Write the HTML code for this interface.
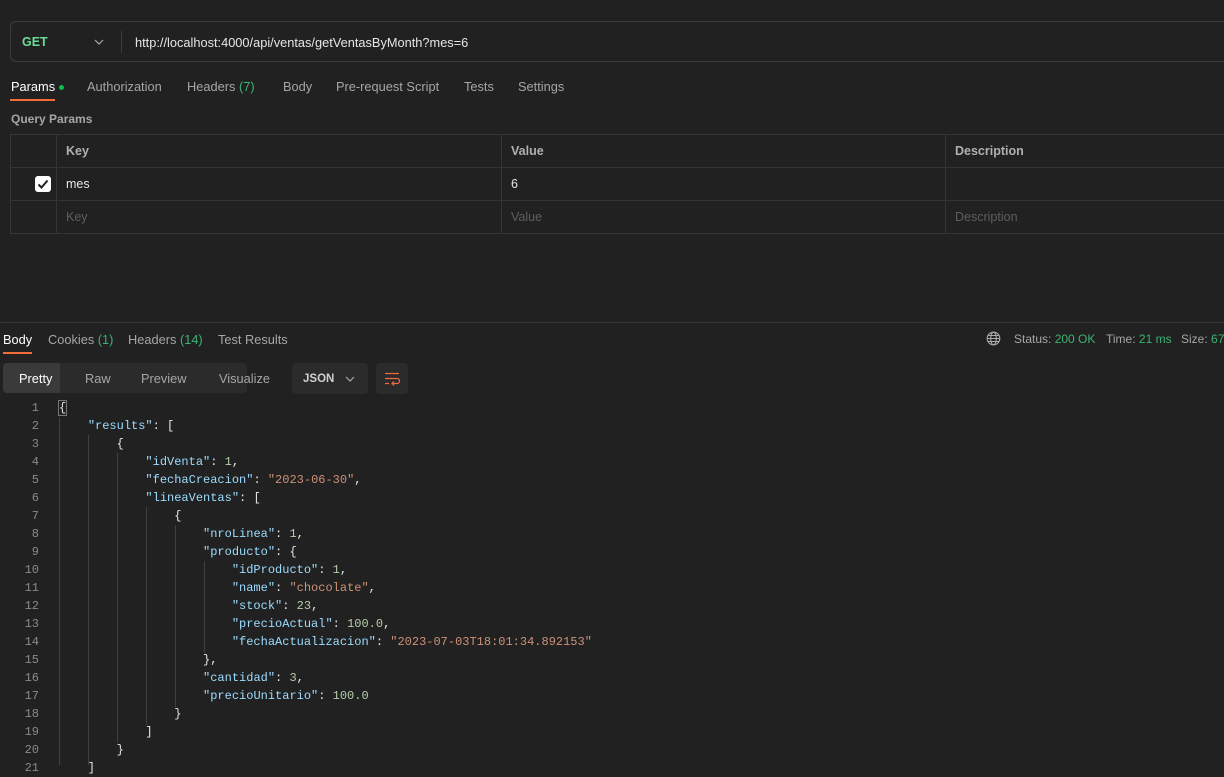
<!DOCTYPE html>
<html><head><style>
body{margin:0;width:1224px;height:765px;background:#212121;font-family:"Liberation Sans",sans-serif;color:#ffffff;overflow:hidden;position:relative;font-size:12px}
.a{position:absolute}
.url{left:10px;top:21px;width:1230px;height:41px;border:1px solid #3c3c3c;border-radius:6px;box-sizing:border-box}
.tab{position:absolute;font-size:12.8px;color:#a6a6a6;white-space:nowrap}
.g{color:#3cb371}
table{position:absolute;left:10px;top:134px;border-collapse:collapse;font-size:12.5px;table-layout:fixed;width:1235px}
td{border:1px solid #353535;height:33px;padding:0 0 0 9px;color:#e6e6e6;box-sizing:border-box}
.code{position:absolute;left:0;top:399px;font-family:"Liberation Mono",monospace;font-size:12px;line-height:18px;white-space:pre;color:#e6e6e6}
.ln{display:inline-block;width:39px;text-align:right;color:#8a8a8a;margin-right:20px}
.k{color:#9cdcfe}.s{color:#ce9178}.n{color:#b5cea8}
.guide{position:absolute;width:1px;background:#404040}
</style></head><body>
<div class="a url"></div>
<div class="a" style="left:22px;top:35px;font-size:12.5px;font-weight:bold;color:#6bdd9a">GET</div>
<svg class="a" style="left:93px;top:37px" width="12" height="10"><path d="M2 3l4 4 4-4" stroke="#aaa" fill="none" stroke-width="1.2"/></svg>
<div class="a" style="left:121px;top:31px;width:1px;height:22px;background:#3c3c3c"></div>
<div class="a" style="left:135px;top:35px;font-size:12.8px;color:#e6e6e6">http://localhost:4000/api/ventas/getVentasByMonth?mes=6</div>

<div class="tab" style="left:11px;top:79px;color:#fff">Params <span style="display:inline-block;width:5px;height:5px;border-radius:50%;background:#0cbb52;vertical-align:middle"></span></div>
<div class="a" style="left:10px;top:99px;width:45px;height:2px;background:#f26b3a"></div>
<div class="tab" style="left:87px;top:79px">Authorization</div>
<div class="tab" style="left:187px;top:79px">Headers <span class="g">(7)</span></div>
<div class="tab" style="left:283px;top:79px">Body</div>
<div class="tab" style="left:336px;top:79px">Pre-request Script</div>
<div class="tab" style="left:464px;top:79px">Tests</div>
<div class="tab" style="left:518px;top:79px">Settings</div>
<div class="a" style="left:11px;top:112px;font-size:12px;font-weight:bold;color:#a6a6a6">Query Params</div>

<table>
<colgroup><col style="width:46px"><col style="width:445px"><col style="width:444px"><col style="width:300px"></colgroup>
<tr><td></td><td style="font-weight:bold;color:#b0b0b0">Key</td><td style="font-weight:bold;color:#b0b0b0">Value</td><td style="font-weight:bold;color:#b0b0b0">Description</td></tr>
<tr><td style="padding-left:24px"><span style="display:inline-block;width:16px;height:16px;background:#fff;border-radius:3px;vertical-align:middle;position:relative"><svg width="16" height="16" style="position:absolute;left:0;top:0"><path d="M3.5 8.5l3 3 6-7" stroke="#212121" stroke-width="2" fill="none"/></svg></span></td><td>mes</td><td>6</td><td></td></tr>
<tr><td></td><td style="color:#5e5e5e">Key</td><td style="color:#5e5e5e">Value</td><td style="color:#5e5e5e">Description</td></tr>
</table>

<div class="a" style="left:0;top:322px;width:1224px;height:1px;background:#353535"></div>
<div class="tab" style="left:3px;top:332px;color:#fff">Body</div>
<div class="a" style="left:3px;top:352px;width:29px;height:2px;background:#f26b3a"></div>
<div class="tab" style="left:48px;top:332px">Cookies <span class="g">(1)</span></div>
<div class="tab" style="left:128px;top:332px">Headers <span class="g">(14)</span></div>
<div class="tab" style="left:218px;top:332px">Test Results</div>
<svg class="a" style="left:986px;top:331px" width="15" height="15" fill="none" stroke="#aaa" stroke-width="1.1"><circle cx="7.5" cy="7.5" r="6.3"/><ellipse cx="7.5" cy="7.5" rx="2.8" ry="6.3"/><path d="M1.2 7.5h12.6M2 4.5h11M2 10.5h11"/></svg>
<div class="tab" style="left:1014px;top:332px;font-size:12px">Status: <span class="g">200 OK</span></div>
<div class="tab" style="left:1106px;top:332px;font-size:12px">Time: <span class="g">21 ms</span></div>
<div class="tab" style="left:1181px;top:332px;font-size:12px">Size: <span class="g">679 B</span></div>

<div class="a" style="left:3px;top:363px;width:244px;height:30px;background:#2b2b2b;border-radius:4px"></div>
<div class="a" style="left:3px;top:363px;width:57px;height:30px;background:#3a3a3a;border-radius:4px 0 0 4px"></div>
<div class="tab" style="left:19px;top:371px;color:#fff">Pretty</div>
<div class="tab" style="left:85px;top:371px">Raw</div>
<div class="tab" style="left:141px;top:371px">Preview</div>
<div class="tab" style="left:219px;top:371px">Visualize</div>
<div class="a" style="left:292px;top:363px;width:76px;height:31px;background:#2b2b2b;border-radius:4px"></div>
<div class="a" style="left:303px;top:373px;font-size:11.5px;font-weight:bold;color:#d0d0d0">JSON</div>
<svg class="a" style="left:344px;top:374px" width="12" height="10"><path d="M2 3l4 4 4-4" stroke="#aaa" fill="none" stroke-width="1.2"/></svg>
<div class="a" style="left:376px;top:363px;width:32px;height:31px;background:#2b2b2b;border-radius:4px"></div>
<svg class="a" style="left:384px;top:371px" width="16" height="16" fill="none" stroke="#f26b3a" stroke-width="1.2"><path d="M1 2.5h14M1 7.5h12a2.5 2.5 0 0 1 0 5H8M10 10.5l-2 2 2 2M1 12.5h4"/></svg>

<div class="guide" style="left:59px;top:417px;height:348px"></div>
<div class="guide" style="left:88px;top:435px;height:330px"></div>
<div class="guide" style="left:117px;top:453px;height:290px"></div>
<div class="guide" style="left:146px;top:507px;height:218px"></div>
<div class="guide" style="left:175px;top:525px;height:182px"></div>
<div class="guide" style="left:204px;top:561px;height:92px"></div>
<div class="code"><span class="ln">1</span><span style="outline:1px solid #777">{</span>
<span class="ln">2</span>    <span class="k">"results"</span>: [
<span class="ln">3</span>        {
<span class="ln">4</span>            <span class="k">"idVenta"</span>: <span class="n">1</span>,
<span class="ln">5</span>            <span class="k">"fechaCreacion"</span>: <span class="s">"2023-06-30"</span>,
<span class="ln">6</span>            <span class="k">"lineaVentas"</span>: [
<span class="ln">7</span>                {
<span class="ln">8</span>                    <span class="k">"nroLinea"</span>: <span class="n">1</span>,
<span class="ln">9</span>                    <span class="k">"producto"</span>: {
<span class="ln">10</span>                        <span class="k">"idProducto"</span>: <span class="n">1</span>,
<span class="ln">11</span>                        <span class="k">"name"</span>: <span class="s">"chocolate"</span>,
<span class="ln">12</span>                        <span class="k">"stock"</span>: <span class="n">23</span>,
<span class="ln">13</span>                        <span class="k">"precioActual"</span>: <span class="n">100.0</span>,
<span class="ln">14</span>                        <span class="k">"fechaActualizacion"</span>: <span class="s">"2023-07-03T18:01:34.892153"</span>
<span class="ln">15</span>                    },
<span class="ln">16</span>                    <span class="k">"cantidad"</span>: <span class="n">3</span>,
<span class="ln">17</span>                    <span class="k">"precioUnitario"</span>: <span class="n">100.0</span>
<span class="ln">18</span>                }
<span class="ln">19</span>            ]
<span class="ln">20</span>        }
<span class="ln">21</span>    ]
</div>
</body></html>
